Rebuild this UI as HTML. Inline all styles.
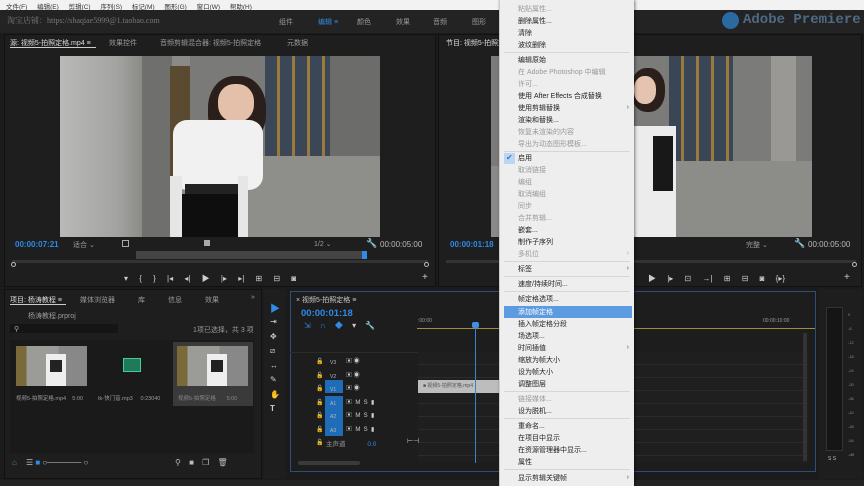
<!DOCTYPE html>
<html><head><meta charset="utf-8">
<style>
*{margin:0;padding:0;box-sizing:border-box}
body{width:864px;height:486px;overflow:hidden;background:#1b1b1b;font-family:"Liberation Sans","Noto Sans CJK SC",sans-serif;font-size:7px;color:#9a9a9a;position:relative}
.a{position:absolute}
.t{position:absolute;white-space:nowrap}
.blue{color:#2e8be6}
.vid{position:absolute;overflow:hidden;background:#8a8a88}
.menu{position:absolute;left:499px;top:0;width:135px;height:486px;background:#eeeeee;border-left:1px solid #ccc;box-shadow:1px 0 3px rgba(0,0,0,.5)}
.mi{position:absolute;left:18px;font-size:7px;color:#222;white-space:nowrap;line-height:9px}
.mi.g{color:#999}
.sep{position:absolute;left:4px;right:4px;height:1px;background:#d6d6d6}
.arr{position:absolute;right:5px;font-size:7px;color:#555}
</style></head><body>
<div class="a" style="left:0;top:0;width:864px;height:10px;background:#f2f2f2"></div>
<div class="t" style="left:6px;top:1px;font-size:6.5px;color:#333;word-spacing:8px">文件(F) 编辑(E) 剪辑(C) 序列(S) 标记(M) 图形(G) 窗口(W) 帮助(H)</div>
<div class="a" style="left:0;top:10px;width:864px;height:23px;background:#232323"></div>
<div class="t" style="left:7px;top:15px;font-size:8px;color:#777;font-family:'Liberation Serif','Noto Serif CJK SC',serif">淘宝店铺：https://shaqiae5999@1.taobao.com</div>
<div class="t" style="left:279px;top:17px;color:#999">组件</div>
<div class="t" style="left:318px;top:17px;color:#2e8be6">编辑 ≡</div>
<div class="t" style="left:357px;top:17px;color:#999">颜色</div>
<div class="t" style="left:396px;top:17px;color:#999">效果</div>
<div class="t" style="left:433px;top:17px;color:#999">音频</div>
<div class="t" style="left:472px;top:17px;color:#999">图形</div>
<div class="a" style="left:722px;top:12px;width:17px;height:17px;border-radius:50%;background:#2a6aa0"></div>
<div class="t" style="left:743px;top:12px;font-size:14px;color:#4e6a85;font-family:'Liberation Mono',monospace;font-weight:bold">Adobe Premiere</div>
<!-- source panel -->
<div class="a" style="left:4px;top:34px;width:432px;height:253px;background:#1e1e1e;border:1px solid #111"></div>
<div class="t" style="left:10px;top:38px;color:#ddd">源: 视频5-拍照定格.mp4 ≡</div>
<div class="a" style="left:10px;top:47px;width:86px;height:1px;background:#ccc"></div>
<div class="t" style="left:109px;top:38px">效果控件</div>
<div class="t" style="left:160px;top:38px">音频剪辑混合器: 视频5-拍照定格</div>
<div class="t" style="left:287px;top:38px">元数据</div>
<div class="vid" style="left:60px;top:56px;width:320px;height:181px">
 <div class="a" style="left:0;top:0;width:82px;height:181px;background:linear-gradient(90deg,#b9b9b7,#a3a3a1 70%,#8a8a86)"></div>
 <div class="a" style="left:82px;top:0;width:30px;height:181px;background:#6f6f6d"></div>
 <div class="a" style="left:110px;top:10px;width:20px;height:120px;background:#5a4a30"></div>
 <div class="a" style="left:130px;top:0;width:190px;height:105px;background:#7a7a78"></div>
 <div class="a" style="left:205px;top:0;width:65px;height:100px;background:repeating-linear-gradient(90deg,#3b4656 0 12px,#9a7a3a 12px 15px)"></div>
 <div class="a" style="left:270px;top:0;width:50px;height:110px;background:#6c6c6a"></div>
 <div class="a" style="left:130px;top:100px;width:190px;height:81px;background:#8e8e8a"></div>
 <div class="a" style="left:148px;top:20px;width:58px;height:70px;border-radius:45%;background:#2a1f1a"></div>
 <div class="a" style="left:158px;top:28px;width:36px;height:38px;border-radius:45%;background:#e4c0aa"></div>
 <div class="a" style="left:113px;top:64px;width:90px;height:70px;border-radius:14px;background:#f1f1f1"></div>
 <div class="a" style="left:125px;top:128px;width:60px;height:14px;background:#222"></div>
 <div class="a" style="left:120px;top:138px;width:62px;height:43px;background:#0e0e0e"></div>
 <div class="a" style="left:110px;top:120px;width:12px;height:61px;background:#e6e6e6"></div>
 <div class="a" style="left:178px;top:120px;width:10px;height:61px;background:#e6e6e6"></div>
</div>
<div class="t blue" style="left:15px;top:240px;font-size:8px;font-weight:bold">00:00:07:21</div>
<div class="t" style="left:73px;top:240px">适合 ⌄</div>
<div class="a" style="left:122px;top:240px;width:7px;height:7px;border:1px solid #aaa"></div>
<div class="a" style="left:204px;top:240px;width:6px;height:6px;background:#aaa"></div>
<div class="t" style="left:314px;top:240px">1/2 ⌄</div>
<div class="t" style="left:366px;top:238px;color:#ccc;font-size:9px">🔧</div>
<div class="t" style="left:380px;top:240px;font-size:8px;color:#bbb">00:00:05:00</div>
<div class="a" style="left:136px;top:251px;width:230px;height:8px;background:#444"></div>
<div class="a" style="left:362px;top:251px;width:5px;height:8px;background:#2e8be6"></div>
<div class="a" style="left:12px;top:260px;width:416px;height:3px;background:#333"></div>
<div class="a" style="left:11px;top:262px;width:5px;height:5px;border:1px solid #bbb;border-radius:50%"></div>
<div class="a" style="left:424px;top:262px;width:5px;height:5px;border:1px solid #bbb;border-radius:50%"></div>
<div class="t" style="left:124px;top:273px;color:#ccc;font-size:8px;word-spacing:9px">▾ { } |◂ ◂| ▶ |▸ ▸| ⊞ ⊟ ◙</div>
<div class="t" style="left:422px;top:272px;color:#ccc;font-size:10px">+</div>
<!-- program panel -->
<div class="a" style="left:438px;top:34px;width:424px;height:253px;background:#1e1e1e;border:1px solid #111"></div>
<div class="t" style="left:446px;top:38px;color:#ddd">节目: 视频5-拍照定格 ≡</div>
<div class="vid" style="left:491px;top:56px;width:321px;height:181px">
 <div class="a" style="left:0;top:0;width:321px;height:110px;background:#7b7b79"></div>
 <div class="a" style="left:178px;top:0;width:64px;height:105px;background:repeating-linear-gradient(90deg,#3a4656 0 12px,#9a7a3a 12px 15px)"></div>
 <div class="a" style="left:280px;top:0;width:25px;height:150px;background:#999894"></div>
 <div class="a" style="left:150px;top:105px;width:171px;height:76px;background:#8c8c88"></div>
 <div class="a" style="left:140px;top:12px;width:34px;height:44px;border-radius:45%;background:#2a1f1a"></div>
 <div class="a" style="left:143px;top:20px;width:22px;height:28px;border-radius:45%;background:#e4c4b0"></div>
 <div class="a" style="left:140px;top:70px;width:45px;height:111px;background:#ececec"></div>
 <div class="a" style="left:162px;top:80px;width:20px;height:55px;background:#181818"></div>
</div>
<div class="t blue" style="left:450px;top:240px;font-size:8px;font-weight:bold">00:00:01:18</div>
<div class="t" style="left:746px;top:240px">完整 ⌄</div>
<div class="t" style="left:794px;top:238px;color:#ccc;font-size:9px">🔧</div>
<div class="t" style="left:808px;top:240px;font-size:8px;color:#bbb">00:00:05:00</div>
<div class="a" style="left:446px;top:260px;width:410px;height:3px;background:#333"></div>
<div class="a" style="left:852px;top:262px;width:5px;height:5px;border:1px solid #bbb;border-radius:50%"></div>
<div class="t" style="left:648px;top:273px;color:#ccc;font-size:8px;word-spacing:9px">▶ |▸ ⊡ →| ⊞ ⊟ ◙ {▸}</div>
<div class="t" style="left:844px;top:272px;color:#ccc;font-size:10px">+</div>
<!-- project panel -->
<div class="a" style="left:4px;top:289px;width:258px;height:190px;background:#1e1e1e;border:1px solid #111"></div>
<div class="t" style="left:10px;top:295px;color:#ddd">项目: 杨涛教程 ≡</div>
<div class="a" style="left:10px;top:304px;width:56px;height:1px;background:#ccc"></div>
<div class="t" style="left:80px;top:295px">媒体浏览器</div>
<div class="t" style="left:138px;top:295px">库</div>
<div class="t" style="left:168px;top:295px">信息</div>
<div class="t" style="left:205px;top:295px">效果</div>
<div class="t" style="left:251px;top:294px">»</div>
<div class="t" style="left:28px;top:311px">杨涛教程.prproj</div>
<div class="a" style="left:10px;top:324px;width:108px;height:9px;background:#151515"></div>
<div class="t" style="left:14px;top:325px;color:#aaa">⚲</div>
<div class="t" style="left:193px;top:325px">1项已选择，共 3 项</div>
<div class="a" style="left:10px;top:340px;width:244px;height:113px;background:#1a1a1a"></div>
<div class="a" style="left:173px;top:342px;width:80px;height:64px;background:#3a3a3a"></div>
<div class="vid" style="left:16px;top:346px;width:71px;height:40px;background:linear-gradient(90deg,#7a6a3a 0 15%,#9b9b98 15% 60%,#888 60%)"><div class="a" style="left:30px;top:8px;width:20px;height:32px;background:#eee"></div><div class="a" style="left:34px;top:14px;width:12px;height:12px;background:#222"></div></div>
<div class="vid" style="left:177px;top:346px;width:71px;height:40px;background:linear-gradient(90deg,#7a6a3a 0 15%,#9b9b98 15% 60%,#888 60%)"><div class="a" style="left:30px;top:8px;width:20px;height:32px;background:#eee"></div><div class="a" style="left:34px;top:14px;width:12px;height:12px;background:#222"></div></div>
<div class="a" style="left:123px;top:358px;width:18px;height:14px;background:#1f7a5a;border:1px solid #4c9"></div>
<div class="t" style="left:16px;top:394px;font-size:5.5px">视频5-拍照定格.mp4 &nbsp;&nbsp; 5:00</div>
<div class="t" style="left:98px;top:394px;font-size:5.5px">tk-快门音.mp3 &nbsp;&nbsp;&nbsp; 0:23040</div>
<div class="t" style="left:178px;top:394px;font-size:5.5px;color:#888">视频5-拍照定格 &nbsp;&nbsp;&nbsp;&nbsp;&nbsp; 5:00</div>
<div class="t" style="left:12px;top:458px;color:#3a3;font-size:8px">⌂</div>
<div class="t" style="left:26px;top:458px;color:#bbb;font-size:8px">☰ <span style="color:#2e8be6">■</span> ○────── ○</div>
<div class="t" style="left:175px;top:458px;color:#bbb;font-size:8px;word-spacing:6px">⚲ ■ ❐ 🗑</div>
<!-- tools -->
<div class="a" style="left:264px;top:289px;width:22px;height:190px;background:#1e1e1e"></div>
<div class="t" style="left:270px;top:300px;color:#2e8be6;font-size:10px">▶</div>
<div class="t" style="left:270px;top:315px;color:#ccc;font-size:8px;line-height:14.5px">⇥<br>✥<br>⧄<br>↔<br>✎<br>✋<br><b>T</b></div>
<!-- timeline -->
<div class="a" style="left:290px;top:291px;width:526px;height:181px;background:#1d1d1d;border:1px solid #2d4e7a"></div>
<div class="t" style="left:296px;top:295px;color:#ccc">× 视频5-拍照定格 ≡</div>
<div class="t blue" style="left:301px;top:308px;font-size:9.5px;font-weight:bold">00:00:01:18</div>
<div class="t" style="left:304px;top:320px;color:#2e8be6;font-size:8px;word-spacing:7px">⇲ ∩ ◆ <span style="color:#ccc">▾ 🔧</span></div>
<div class="t" style="left:418px;top:318px;font-size:5px">:00:00</div>
<div class="t" style="left:763px;top:318px;font-size:5px">00:00:10:00</div>
<div class="a" style="left:417px;top:328px;width:398px;height:1px;background:#9a9040"></div>
<div class="a" style="left:418px;top:352px;width:390px;height:110px;background:repeating-linear-gradient(180deg,#1f1f1f 0 12px,#2b2b2b 12px 13px)"></div>
<div class="a" style="left:290px;top:352px;width:128px;height:1px;background:#2b2b2b"></div>
<div class="t" style="left:316px;top:356px;font-size:6px;line-height:13.5px;color:#aaa">🔓<br>🔓<br>🔓<br>🔓<br>🔓<br>🔓<br>🔓</div>
<div class="a" style="left:325px;top:380px;width:18px;height:13px;background:#1f6db8"></div>
<div class="a" style="left:325px;top:396px;width:18px;height:40px;background:#1f6db8"></div>
<div class="t" style="left:330px;top:357px;font-size:5px;line-height:13.5px;color:#bbb">V3<br>V2<br>V1<br>A1<br>A2<br>A3</div>
<div class="t" style="left:346px;top:356px;font-size:6px;line-height:13.5px;color:#ccc">▣ ◉<br>▣ ◉<br>▣ ◉<br>▣ &nbsp;M&nbsp; S &nbsp;▮<br>▣ &nbsp;M&nbsp; S &nbsp;▮<br>▣ &nbsp;M&nbsp; S &nbsp;▮</div>
<div class="t" style="left:326px;top:438px;font-size:6.5px">主声道 <span class="blue" style="margin-left:20px">0.0</span></div>
<div class="t" style="left:407px;top:437px;color:#ccc;font-size:7px">⊢⊣</div>
<div class="a" style="left:418px;top:380px;width:85px;height:13px;background:#bdbdbd"></div>
<div class="t" style="left:423px;top:382px;font-size:5px;color:#555">■ 视频5-拍照定格.mp4</div>
<div class="a" style="left:475px;top:325px;width:1px;height:138px;background:#3f82cc"></div>
<div class="a" style="left:472px;top:322px;width:7px;height:6px;background:#3f8fe6;border-radius:2px"></div>
<div class="a" style="left:803px;top:333px;width:4px;height:128px;background:#333"></div>
<div class="a" style="left:298px;top:461px;width:62px;height:4px;background:#3a3a3a;border-radius:2px"></div>
<!-- audio meter -->
<div class="a" style="left:819px;top:289px;width:43px;height:190px;background:#1e1e1e"></div>
<div class="a" style="left:826px;top:307px;width:17px;height:144px;background:#151515;border:1px solid #333"></div>
<div class="t" style="left:848px;top:308px;font-size:4px;line-height:14px;color:#888">0<br>-6<br>-12<br>-18<br>-24<br>-30<br>-36<br>-42<br>-48<br>-54<br>-dB</div>
<div class="t" style="left:828px;top:456px;font-size:5px;color:#bbb">S S</div>
<div class="a" style="left:0;top:480px;width:864px;height:6px;background:#232323"></div>
<!-- context menu -->
<div class="menu">
<div class="mi g" style="top:5px">粘贴属性...</div>
<div class="mi" style="top:17px">删除属性...</div>
<div class="mi" style="top:29px">清除</div>
<div class="mi" style="top:41px">波纹删除</div>
<div class="sep" style="top:52px"></div>
<div class="mi" style="top:56px">编辑原始</div>
<div class="mi g" style="top:68px">在 Adobe Photoshop 中编辑</div>
<div class="mi g" style="top:80px">许可...</div>
<div class="mi" style="top:92px">使用 After Effects 合成替换</div>
<div class="mi" style="top:104px">使用剪辑替换</div><div class="arr" style="top:104px">›</div>
<div class="mi" style="top:116px">渲染和替换...</div>
<div class="mi g" style="top:128px">恢复未渲染的内容</div>
<div class="mi g" style="top:140px">导出为动态图形模板...</div>
<div class="sep" style="top:151px"></div>
<div class="a" style="left:4px;top:153px;width:11px;height:11px;background:#bcd6f2"></div>
<div class="t" style="left:6px;top:153px;color:#2e7be0;font-size:8px">✔</div>
<div class="mi" style="top:154px">启用</div>
<div class="mi g" style="top:166px">取消链接</div>
<div class="mi g" style="top:178px">编组</div>
<div class="mi g" style="top:190px">取消编组</div>
<div class="mi g" style="top:202px">同步</div>
<div class="mi g" style="top:214px">合并剪辑...</div>
<div class="mi" style="top:226px">嵌套...</div>
<div class="mi" style="top:238px">制作子序列</div>
<div class="mi g" style="top:250px">多机位</div><div class="arr" style="top:250px;color:#aaa">›</div>
<div class="sep" style="top:261px"></div>
<div class="mi" style="top:265px">标签</div><div class="arr" style="top:265px">›</div>
<div class="sep" style="top:276px"></div>
<div class="mi" style="top:280px">速度/持续时间...</div>
<div class="sep" style="top:291px"></div>
<div class="mi" style="top:295px">帧定格选项...</div>
<div class="a" style="left:4px;top:306px;width:128px;height:12px;background:#5d9be0"></div>
<div class="mi" style="top:308px;color:#fff">添加帧定格</div>
<div class="mi" style="top:320px">插入帧定格分段</div>
<div class="mi" style="top:332px">场选项...</div>
<div class="mi" style="top:344px">时间插值</div><div class="arr" style="top:344px">›</div>
<div class="mi" style="top:356px">缩放为帧大小</div>
<div class="mi" style="top:368px">设为帧大小</div>
<div class="mi" style="top:380px">调整图层</div>
<div class="sep" style="top:391px"></div>
<div class="mi g" style="top:395px">链接媒体...</div>
<div class="mi" style="top:407px">设为脱机...</div>
<div class="sep" style="top:418px"></div>
<div class="mi" style="top:422px">重命名...</div>
<div class="mi" style="top:434px">在项目中显示</div>
<div class="mi" style="top:446px">在资源管理器中显示...</div>
<div class="mi" style="top:458px">属性</div>
<div class="sep" style="top:469px"></div>
<div class="mi" style="top:474px">显示剪辑关键帧</div><div class="arr" style="top:474px">›</div>
</div>
</body></html>
